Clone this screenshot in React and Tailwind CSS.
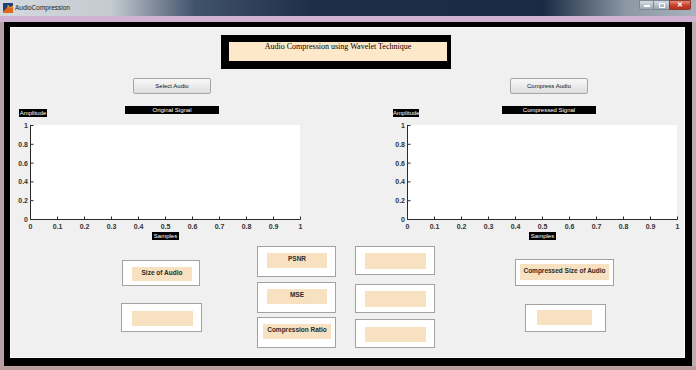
import React from "react";

const xTicks = [0, 0.1, 0.2, 0.3, 0.4, 0.5, 0.6, 0.7, 0.8, 0.9, 1];
const yTicks = [0, 0.2, 0.4, 0.6, 0.8, 1];

function Axes() {
    return (
        <svg width="292" height="110" className="mt-[4px] block" style={{ fontFamily: "'Liberation Sans', Arial, sans-serif" }}>
            <rect x="14" y="4" width="270" height="94" fill="#ffffff" />
            <path d="M14.5 4 V98.5 H284.5" stroke="#2a2a2a" strokeWidth="1" fill="none" />
            {yTicks.map((t, k) => {
                const y = 98.5 - k * 18.8;
                return (
                    <g key={t}>
                        <path d={`M14.5 ${y} h3`} stroke="#2a2a2a" />
                        <text x="12" y={y + 2.5} fontSize="7" fontWeight="bold" textAnchor="end" fill="#333">
                            {t}
                        </text>
                    </g>
                );
            })}
            {xTicks.map((t, k) => {
                const x = 14.5 + k * 27;
                return (
                    <g key={t}>
                        <path d={`M${x} 98.5 v-3`} stroke="#2a2a2a" />
                        <text x={x} y="108" fontSize="7" fontWeight="bold" textAnchor="middle" fill="#333">
                            {t}
                        </text>
                    </g>
                );
            })}
        </svg>
    );
}

function PlotColumn({ button, title, ampClass, titleClass }) {
    return (
        <div className="w-[292px] flex flex-col">
            <button className="ml-[117px] w-[78px] h-[16px] border border-[#a5a5a5] rounded-[2px] bg-[linear-gradient(#f8f8f8,#dedede)] text-[6px] leading-[14px] text-[#111]">
                {button}
            </button>
            <div className="mt-[12px] h-[11px] flex items-start">
                <div className={ampClass}>Amplitude</div>
                <div className={titleClass}>{title}</div>
            </div>
            <Axes />
            <div className="ml-[136px] mt-[1px] w-[27px] h-[8px] bg-black text-white text-[6px] leading-[8px] text-center">
                Samples
            </div>
        </div>
    );
}

function Field({ outer, inner, children }) {
    return (
        <div className={`bg-white border border-[#a2a2a2] ${outer}`}>
            <div className={`bg-[#f7e1c1] text-[6.5px] leading-[9px] font-bold text-center text-[#2a2a2a] ${inner}`}>{children}</div>
        </div>
    );
}

export default function App() {
    return (
        <div className="w-[696px] h-[370px] overflow-hidden flex flex-col bg-[#c2a9bc] font-['Liberation_Sans',Arial,sans-serif]">
            {/* title bar */}
            <div className="h-[16px] flex items-center bg-[linear-gradient(90deg,#d4d9de_0%,#c4cad0_16%,#41526b_28%,#1f2e48_45%,#1b2a44_78%,#8c98a5_90%,#a9b2bc_100%)]">
                <svg width="10" height="10" viewBox="0 0 10 10" className="ml-[3px]">
                    <rect width="10" height="10" fill="#1d3f7a" />
                    <path d="M0 8 L3 6 L5 2 L6.5 5 L10 3 V10 H0Z" fill="#e0661c" />
                    <path d="M5 2 L6.5 5 L10 3" stroke="#f8c040" strokeWidth="0.8" fill="none" />
                </svg>
                <span className="ml-[2px] text-[6.5px] leading-[8px] text-[#1a1a1a]">AudioCompression</span>
                <div className="ml-auto mr-[5px] flex items-start self-start">
                    <div className="w-[15px] h-[10px] border border-[#7a8794] rounded-bl-[2px] bg-[linear-gradient(#d5dbe2,#9fa9b4)] flex items-end justify-center pb-[2px]">
                        <div className="w-[6px] h-[2px] bg-white" />
                    </div>
                    <div className="w-[15px] h-[10px] border-y border-[#7a8794] bg-[linear-gradient(#d5dbe2,#9fa9b4)] flex items-center justify-center">
                        <div className="w-[6px] h-[5px] border border-white" />
                    </div>
                    <div className="w-[22px] h-[10px] border border-[#8a3a30] rounded-br-[2px] bg-[linear-gradient(#e88a78,#c8402c_55%,#b8301c)] text-white text-[7px] leading-[8px] font-bold text-center">
                        ✕
                    </div>
                </div>
            </div>
            <div className="h-[6px] bg-[#cfb1d1]" />

            <div className="flex h-[344px]">
                <div className="w-[4px] bg-[#b89ea8]" />
                <div className="w-[688px] h-[344px] bg-black pl-[6px] pr-[7px] pt-[5px] pb-[8px]">
                    <div className="w-[675px] h-[331px] bg-[#f0f0f0] shadow-[inset_1px_1px_0_#fbfbfb,inset_-1px_-1px_0_#fbfbfb] flex flex-col">
                        {/* heading */}
                        <div className="ml-[211px] mt-[8px] w-[230px] h-[34px] bg-black pt-[7px] pb-[8px] pl-[8px] pr-[4px]">
                            <div className="h-full bg-[#fde9ca] text-center text-[8px] leading-[10px] text-black font-['Liberation_Serif',serif]">
                                Audio Compression using Wavelet Technique
                            </div>
                        </div>

                        {/* plots */}
                        <div className="mt-[9px] pl-[6px] flex gap-[85px]">
                            <PlotColumn
                                button="Select Audio"
                                title="Original Signal"
                                ampClass="ml-[3px] mt-[3px] w-[28px] h-[8px] bg-black text-white text-[6px] leading-[8px] text-center"
                                titleClass="ml-[78px] w-[94px] h-[8px] bg-black text-white text-[6px] leading-[8px] text-center"
                            />
                            <PlotColumn
                                button="Compress Audio"
                                title="Compressed Signal"
                                ampClass="ml-0 mt-[3px] w-[26px] h-[8px] bg-black text-white text-[6px] leading-[8px] text-center"
                                titleClass="ml-[83px] w-[94px] h-[8px] bg-black text-white text-[6px] leading-[8px] text-center"
                            />
                        </div>

                        {/* results */}
                        <div className="mt-[6px] pl-[111px] flex items-start">
                            <div className="w-[81px] flex flex-col">
                                <Field outer="ml-[1px] mt-[14px] w-[78px] h-[26px]" inner="ml-[9px] mt-[6px] w-[60px] h-[14px] pt-[1px]">
                                    Size of Audio
                                </Field>
                                <Field outer="mt-[17px] w-[81px] h-[29px]" inner="ml-[10px] mt-[7px] w-[61px] h-[15px]" />
                            </div>
                            <div className="ml-[55px] w-[79px] flex flex-col">
                                <Field outer="w-[79px] h-[31px]" inner="ml-[9px] mt-[6px] w-[60px] h-[15px] pt-[1px]">
                                    PSNR
                                </Field>
                                <Field outer="mt-[5px] w-[79px] h-[31px]" inner="ml-[9px] mt-[6px] w-[60px] h-[15px] pt-[1px]">
                                    MSE
                                </Field>
                                <Field outer="mt-[4px] w-[79px] h-[31px]" inner="ml-[5px] mt-[6px] w-[68px] h-[15px] pt-[1px]">
                                    Compression Ratio
                                </Field>
                            </div>
                            <div className="ml-[19px] w-[80px] flex flex-col">
                                <Field outer="w-[80px] h-[29px]" inner="ml-[9px] mt-[6px] w-[61px] h-[16px]" />
                                <Field outer="mt-[9px] w-[80px] h-[29px]" inner="ml-[9px] mt-[6px] w-[61px] h-[16px]" />
                                <Field outer="mt-[6px] w-[80px] h-[29px]" inner="ml-[9px] mt-[7px] w-[61px] h-[15px]" />
                            </div>
                            <div className="ml-[80px] w-[99px] flex flex-col">
                                <Field outer="mt-[13px] w-[99px] h-[27px]" inner="ml-[4px] mt-[4px] w-[89px] h-[16px] pt-[2px]">
                                    Compressed Size of Audio
                                </Field>
                                <Field outer="ml-[10px] mt-[18px] w-[81px] h-[28px]" inner="ml-[11px] mt-[5px] w-[55px] h-[15px]" />
                            </div>
                        </div>
                    </div>
                </div>
                <div className="flex-1 bg-[#bdaeb6]" />
            </div>
            <div className="flex-1 bg-[#b99d9f]" />
        </div>
    );
}
